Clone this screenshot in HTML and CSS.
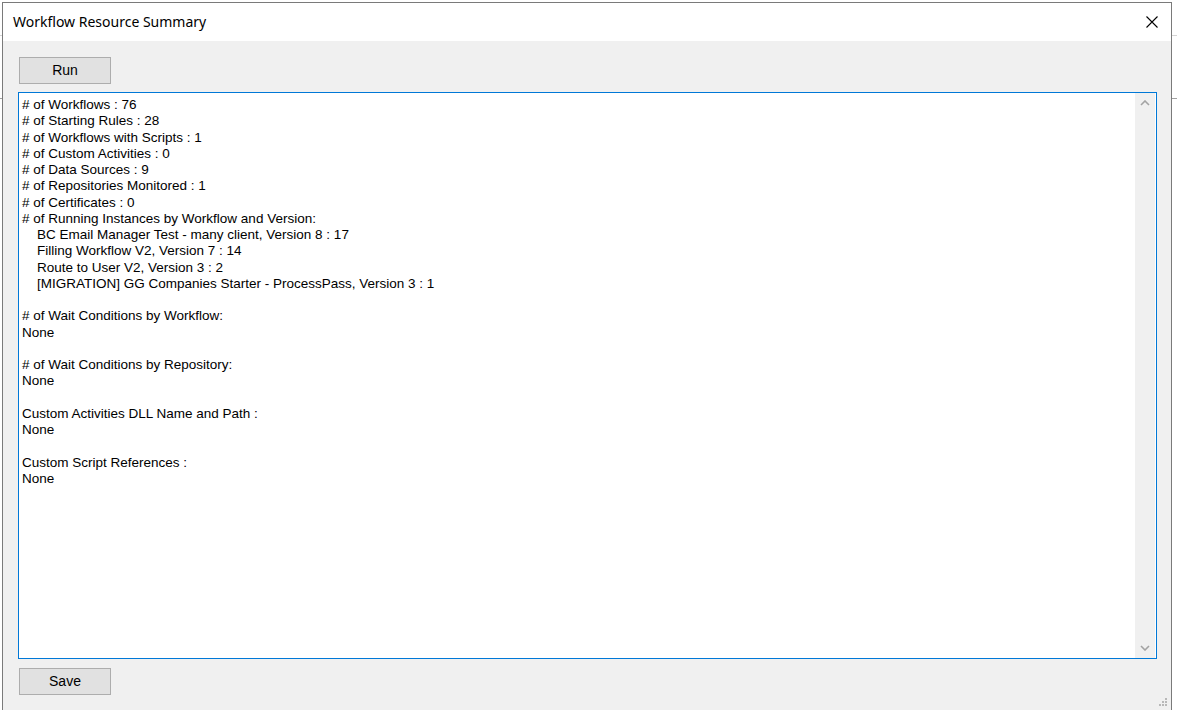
FILE: index.html
```html
<!DOCTYPE html>
<html lang="en">
  <head>
    <meta charset="UTF-8" />
    <title>Workflow Resource Summary</title>
    <link rel="stylesheet" href="styles.css">
  </head>
  <body>
    <div class="window">
      <div class="title-bar">
        <span class="title">Workflow Resource Summary</span>
        <span class="close-btn">
          <svg width="12" height="12" viewBox="0 0 12 12">
            <path d="M0.5 0.5 L11.5 11.5 M11.5 0.5 L0.5 11.5" stroke="#000" stroke-width="1.1" fill="none"/>
          </svg>
        </span>
      </div>
      <div class="client">
        <button class="btn" type="button">Run</button>
        <div class="output-box">
          <div class="output-text">
            <div># of Workflows : 76</div>
            <div># of Starting Rules : 28</div>
            <div># of Workflows with Scripts : 1</div>
            <div># of Custom Activities : 0</div>
            <div># of Data Sources : 9</div>
            <div># of Repositories Monitored : 1</div>
            <div># of Certificates : 0</div>
            <div># of Running Instances by Workflow and Version:</div>
            <div class="indent">BC Email Manager Test - many client, Version 8 : 17</div>
            <div class="indent">Filling Workflow V2, Version 7 : 14</div>
            <div class="indent">Route to User V2, Version 3 : 2</div>
            <div class="indent">[MIGRATION] GG Companies Starter - ProcessPass, Version 3 : 1</div>
            <div class="blank"></div>
            <div># of Wait Conditions by Workflow:</div>
            <div>None</div>
            <div class="blank"></div>
            <div># of Wait Conditions by Repository:</div>
            <div>None</div>
            <div class="blank"></div>
            <div>Custom Activities DLL Name and Path :</div>
            <div>None</div>
            <div class="blank"></div>
            <div>Custom Script References :</div>
            <div>None</div>
          </div>
          <div class="scrollbar">
            <span class="scroll-arrow">
              <svg width="10" height="6" viewBox="0 0 10 6">
                <path d="M1 5 L5 1 L9 5" stroke="#a3a3a3" stroke-width="1.6" fill="none"/>
              </svg>
            </span>
            <span class="scroll-arrow">
              <svg width="10" height="6" viewBox="0 0 10 6">
                <path d="M1 1 L5 5 L9 1" stroke="#a3a3a3" stroke-width="1.6" fill="none"/>
              </svg>
            </span>
          </div>
        </div>
        <button class="btn" type="button">Save</button>
      </div>
      <svg class="grip" width="9" height="9" viewBox="0 0 9 9">
        <rect x="6" y="0" width="2" height="2" fill="#b8b8b8"/>
        <rect x="3" y="3" width="2" height="2" fill="#b8b8b8"/>
        <rect x="6" y="3" width="2" height="2" fill="#b8b8b8"/>
        <rect x="0" y="6" width="2" height="2" fill="#b8b8b8"/>
        <rect x="3" y="6" width="2" height="2" fill="#b8b8b8"/>
        <rect x="6" y="6" width="2" height="2" fill="#b8b8b8"/>
      </svg>
    </div>
  </body>
</html>
```

FILE: styles.css
```css
* {
  box-sizing: border-box;
  margin: 0;
  padding: 0;
}

html,
body {
  height: 100%;
  overflow: hidden;
}

/* the desktop behind the dialog only shows as a thin strip on the right */
body {
  background:
    linear-gradient(#d4d4d4, #d4d4d4) 0 35px / 100% 1px no-repeat,
    linear-gradient(#a0a0a0, #a0a0a0) 0 98px / 100% 1px no-repeat,
    #fff;
  color: #000;
  font-family: "Liberation Sans", Arial, sans-serif;
  padding: 2px 0 0 2px;
}

.window {
  position: relative;
  width: 1170px;
  height: 708px;
  border: 1px solid #7a7a7a;
  border-bottom: 0;
  display: flex;
  flex-direction: column;
}

.title-bar {
  background: #fff;
  height: 38px;
  display: flex;
  align-items: center;
  justify-content: space-between;
  padding: 0 12px 0 10px;
}

.title {
  font-family: "Noto Sans", "Open Sans", sans-serif;
  font-size: 14px;
  color: #000;
  padding-bottom: 2px;
}

.close-btn {
  display: flex;
  width: 12px;
  height: 12px;
  margin-right: 1px;
}

.client {
  flex: 1;
  background: #f0f0f0;
  padding: 16px 0 0 16px;
  display: flex;
  flex-direction: column;
  align-items: flex-start;
}

.btn {
  width: 92px;
  height: 27px;
  background: #e1e1e1;
  border: 1px solid #adadad;
  font-family: "Liberation Sans", Arial, sans-serif;
  font-size: 14px;
  color: #000;
  padding-bottom: 1px;
}

.output-box {
  margin: 8px 0 9px -1px;
  width: 1139px;
  height: 567px;
  background: #fff;
  border: 1px solid #0078d7;
  display: flex;
}

.output-text {
  flex: 1;
  padding: 4px 0 0 3px;
  font-size: 13.5px;
  line-height: 16.26px;
  white-space: nowrap;
}

.indent {
  padding-left: 15px;
}

.blank {
  height: 16.26px;
}

.scrollbar {
  width: 20px;
  margin: 0 1px 0 0;
  background: #f0f0f0;
  display: flex;
  flex-direction: column;
  justify-content: space-between;
}

.scroll-arrow {
  height: 20px;
  display: flex;
  align-items: center;
  justify-content: center;
}

.grip {
  position: absolute;
  right: 3px;
  bottom: 3px;
}
```
